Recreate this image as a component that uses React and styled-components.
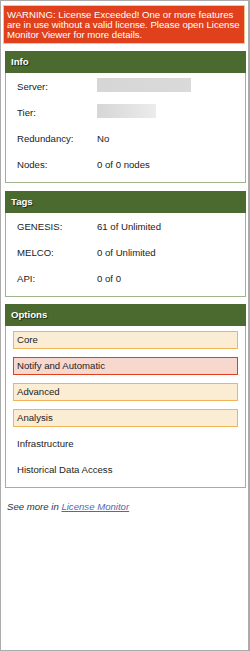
import React from 'react';
import styled, { createGlobalStyle } from 'styled-components';

const GlobalStyle = createGlobalStyle`
  html, body {
    margin: 0;
    padding: 0;
    background: #fff;
  }
  body {
    font-family: 'Liberation Sans', Arial, sans-serif;
  }
`;

const Window = styled.div`
  width: 250px;
  height: 651px;
  box-sizing: border-box;
  border: 1px solid #ababab;
  border-right-width: 2px;
  background: #fff;
  padding: 4px 0 0 2px;
  font-size: 9.6px;
  color: #222;
`;

const Warning = styled.div`
  width: 242px;
  box-sizing: border-box;
  background: #e0411c;
  border: 1px solid #f8c48c;
  color: #fff;
  padding: 4px 3px 3px;
  line-height: 10px;
`;

const Panel = styled.div`
  width: 241px;
  box-sizing: border-box;
  margin: ${(p) => p.$top || 7}px 0 0 2px;
  border: 1px solid #9db48c;
  padding-bottom: ${(p) => p.$pad ?? 5}px;
`;

const Header = styled.div`
  margin: -1px -1px 0;
  height: 22px;
  background: #4b6a2f;
  color: #fff;
  font-weight: bold;
  line-height: 21px;
  padding-left: 6px;
  text-shadow: 1px 1px 1px rgba(0, 0, 0, 0.6);
`;

const Row = styled.div`
  display: flex;
  align-items: center;
  height: 26px;
  padding-left: 11px;
`;

const Label = styled.span`
  width: 80px;
`;

const Placeholder = styled.span`
  display: inline-block;
  width: ${(p) => p.$w}px;
  height: 14px;
  margin-top: -3px;
  background: linear-gradient(90deg, #d6d6d6, ${(p) => (p.$fade ? '#ececec' : '#dadada')});
`;

const OptionList = styled.div`
  padding: 5px 7px 0;
  display: flex;
  flex-direction: column;
  gap: 8px;
`;

const Option = styled.div`
  height: 18px;
  box-sizing: border-box;
  line-height: 16px;
  padding-left: 3px;
  border: 1px solid
    ${(p) => (p.$state === 'warn' ? '#f2b459' : p.$state === 'error' ? '#e0411c' : 'transparent')};
  background: ${(p) => (p.$state === 'warn' ? '#fbedd3' : p.$state === 'error' ? '#f8d7cf' : 'transparent')};
`;

const Footer = styled.div`
  margin: 13px 0 0 4px;
  font-style: italic;
  color: #333;
  line-height: 12px;
`;

const Link = styled.a`
  color: #5368b3;
  text-decoration: underline;
`;

const options = [
  { name: 'Core', state: 'warn' },
  { name: 'Notify and Automatic', state: 'error' },
  { name: 'Advanced', state: 'warn' },
  { name: 'Analysis', state: 'warn' },
  { name: 'Infrastructure' },
  { name: 'Historical Data Access' },
];

export default function App() {
  return (
    <>
      <GlobalStyle />
      <Window>
        <Warning>
          WARNING: License Exceeded! One or more features are in use without a valid license. Please open License
          Monitor Viewer for more details.
        </Warning>

        <Panel>
          <Header>Info</Header>
          <Row>
            <Label>Server:</Label>
            <Placeholder $w={94} />
          </Row>
          <Row>
            <Label>Tier:</Label>
            <Placeholder $w={59} $fade />
          </Row>
          <Row>
            <Label>Redundancy:</Label>
            <span>No</span>
          </Row>
          <Row>
            <Label>Nodes:</Label>
            <span>0 of 0 nodes</span>
          </Row>
        </Panel>

        <Panel $top={8}>
          <Header>Tags</Header>
          <Row>
            <Label>GENESIS:</Label>
            <span>61 of Unlimited</span>
          </Row>
          <Row>
            <Label>MELCO:</Label>
            <span>0 of Unlimited</span>
          </Row>
          <Row>
            <Label>API:</Label>
            <span>0 of 0</span>
          </Row>
        </Panel>

        <Panel $pad={8}>
          <Header>Options</Header>
          <OptionList>
            {options.map((o) => (
              <Option key={o.name} $state={o.state}>
                {o.name}
              </Option>
            ))}
          </OptionList>
        </Panel>

        <Footer>
          See more in <Link href="#">License Monitor</Link>
        </Footer>
      </Window>
    </>
  );
}
